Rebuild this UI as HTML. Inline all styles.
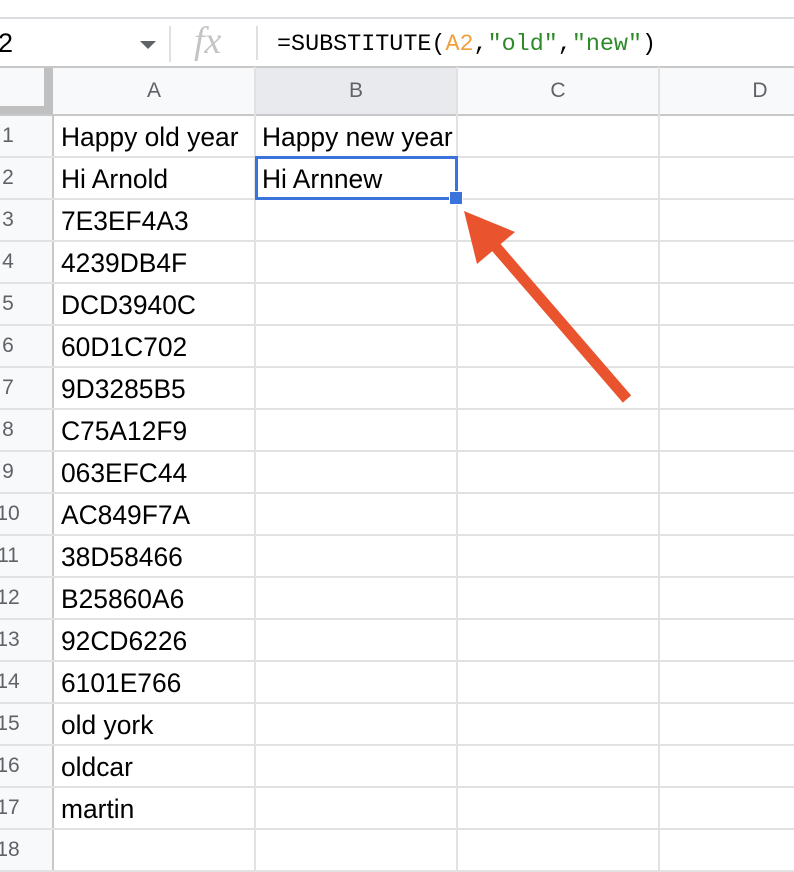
<!DOCTYPE html>
<html><head><style>
body{margin:0;width:794px;height:870px;overflow:hidden;background:#fff;font-family:"Liberation Sans",Arial,sans-serif;position:relative}
.a{position:absolute}
.hl{position:absolute;left:0;width:794px;height:2px;background:#e2e2e2}
.vl{position:absolute;top:67px;width:2px;height:803px;background:#e2e2e2}
.rn{position:absolute;left:-5px;width:26px;text-align:center;font-size:21px;color:#5f6368}
.ct{position:absolute;left:61px;font-size:26.4px;color:#000;white-space:nowrap}
.ch{position:absolute;top:67px;height:48px;line-height:48px;text-align:center;font-size:21px;color:#5f6368}
</style></head><body>
<div class="a" style="left:0;top:17px;width:794px;height:2px;background:#dadce0"></div>
<div class="a" style="left:-2px;top:19px;font-size:27px;line-height:48px;color:#000">2</div>
<div class="a" style="left:140px;top:41px;width:0;height:0;border-left:8px solid transparent;border-right:8px solid transparent;border-top:8px solid #5f6368"></div>
<div class="a" style="left:169px;top:26px;width:2px;height:36px;background:#e0e0e0"></div>
<div class="a" style="left:194px;top:18px;font-family:'Liberation Serif',serif;font-style:italic;font-size:38px;color:#c4c4c4;line-height:46px">fx</div>
<div class="a" style="left:256px;top:26px;width:2px;height:34px;background:#e0e0e0"></div>
<div class="a" style="left:277px;top:22px;font-family:'Liberation Mono',monospace;font-size:23.4px;line-height:46px;color:#000">=SUBSTITUTE(<span style="color:#f0a03c">A2</span>,<span style="color:#2f8a2a">"old"</span>,<span style="color:#2f8a2a">"new"</span>)</div>
<div class="a" style="left:0;top:66px;width:794px;height:2px;background:#c8c8c8"></div>
<div class="a" style="left:0;top:68px;width:794px;height:47px;background:#f8f9fa"></div>
<div class="a" style="left:44px;top:68px;width:9px;height:47px;background:#c0c0c0"></div>
<div class="a" style="left:0;top:106px;width:53px;height:9px;background:#c0c0c0"></div>
<div class="a" style="left:255px;top:68px;width:202px;height:47px;background:#e8eaed"></div>
<div class="a" style="left:0;top:115px;width:53px;height:755px;background:#f8f9fa"></div>
<div class="ch" style="left:53px;width:202px">A</div>
<div class="ch" style="left:255px;width:202px">B</div>
<div class="ch" style="left:457px;width:202px">C</div>
<div class="ch" style="left:659px;width:202px">D</div>
<div class="a" style="left:0;top:114px;width:794px;height:2px;background:#c8c8c8"></div>
<div class="a" style="left:52px;top:115px;width:2px;height:755px;background:#c8c8c8"></div>
<div class="vl" style="left:254px"></div>
<div class="vl" style="left:456px"></div>
<div class="vl" style="left:658px"></div>
<div id="rows"></div>
<script>
var t=["Happy old year","Hi Arnold","7E3EF4A3","4239DB4F","DCD3940C","60D1C702","9D3285B5","C75A12F9","063EFC44","AC849F7A","38D58466","B25860A6","92CD6226","6101E766","old york","oldcar","martin",""];
var h="";
for(var i=0;i<18;i++){var y=115+42*i;
h+='<div class="hl" style="top:'+(y+41)+'px"></div>';
h+='<div class="rn" style="top:'+y+'px;line-height:42px">'+(i+1)+'</div>';
h+='<div class="ct" style="top:'+y+'px;line-height:44px">'+t[i]+'</div>';}
document.getElementById("rows").innerHTML=h;
</script>
<div class="ct" style="left:262px;top:115px;line-height:44px">Happy new year</div>
<div class="a" style="left:255px;top:156px;width:197px;height:38px;border:3px solid #3b73dd;background:#fff"></div>
<div class="ct" style="left:262px;top:157px;line-height:44px">Hi Arnnew</div>
<div class="a" style="left:449px;top:191px;width:14px;height:14px;background:#fff"></div>
<div class="a" style="left:450px;top:192px;width:12px;height:12px;background:#3b73dd"></div>
<svg class="a" style="left:0;top:0" width="794" height="870">
<line x1="627" y1="399" x2="495" y2="246" stroke="#e9532e" stroke-width="11"/>
<polygon points="464,211 515,232 477,264" fill="#e9532e"/>
</svg>
</body></html>
